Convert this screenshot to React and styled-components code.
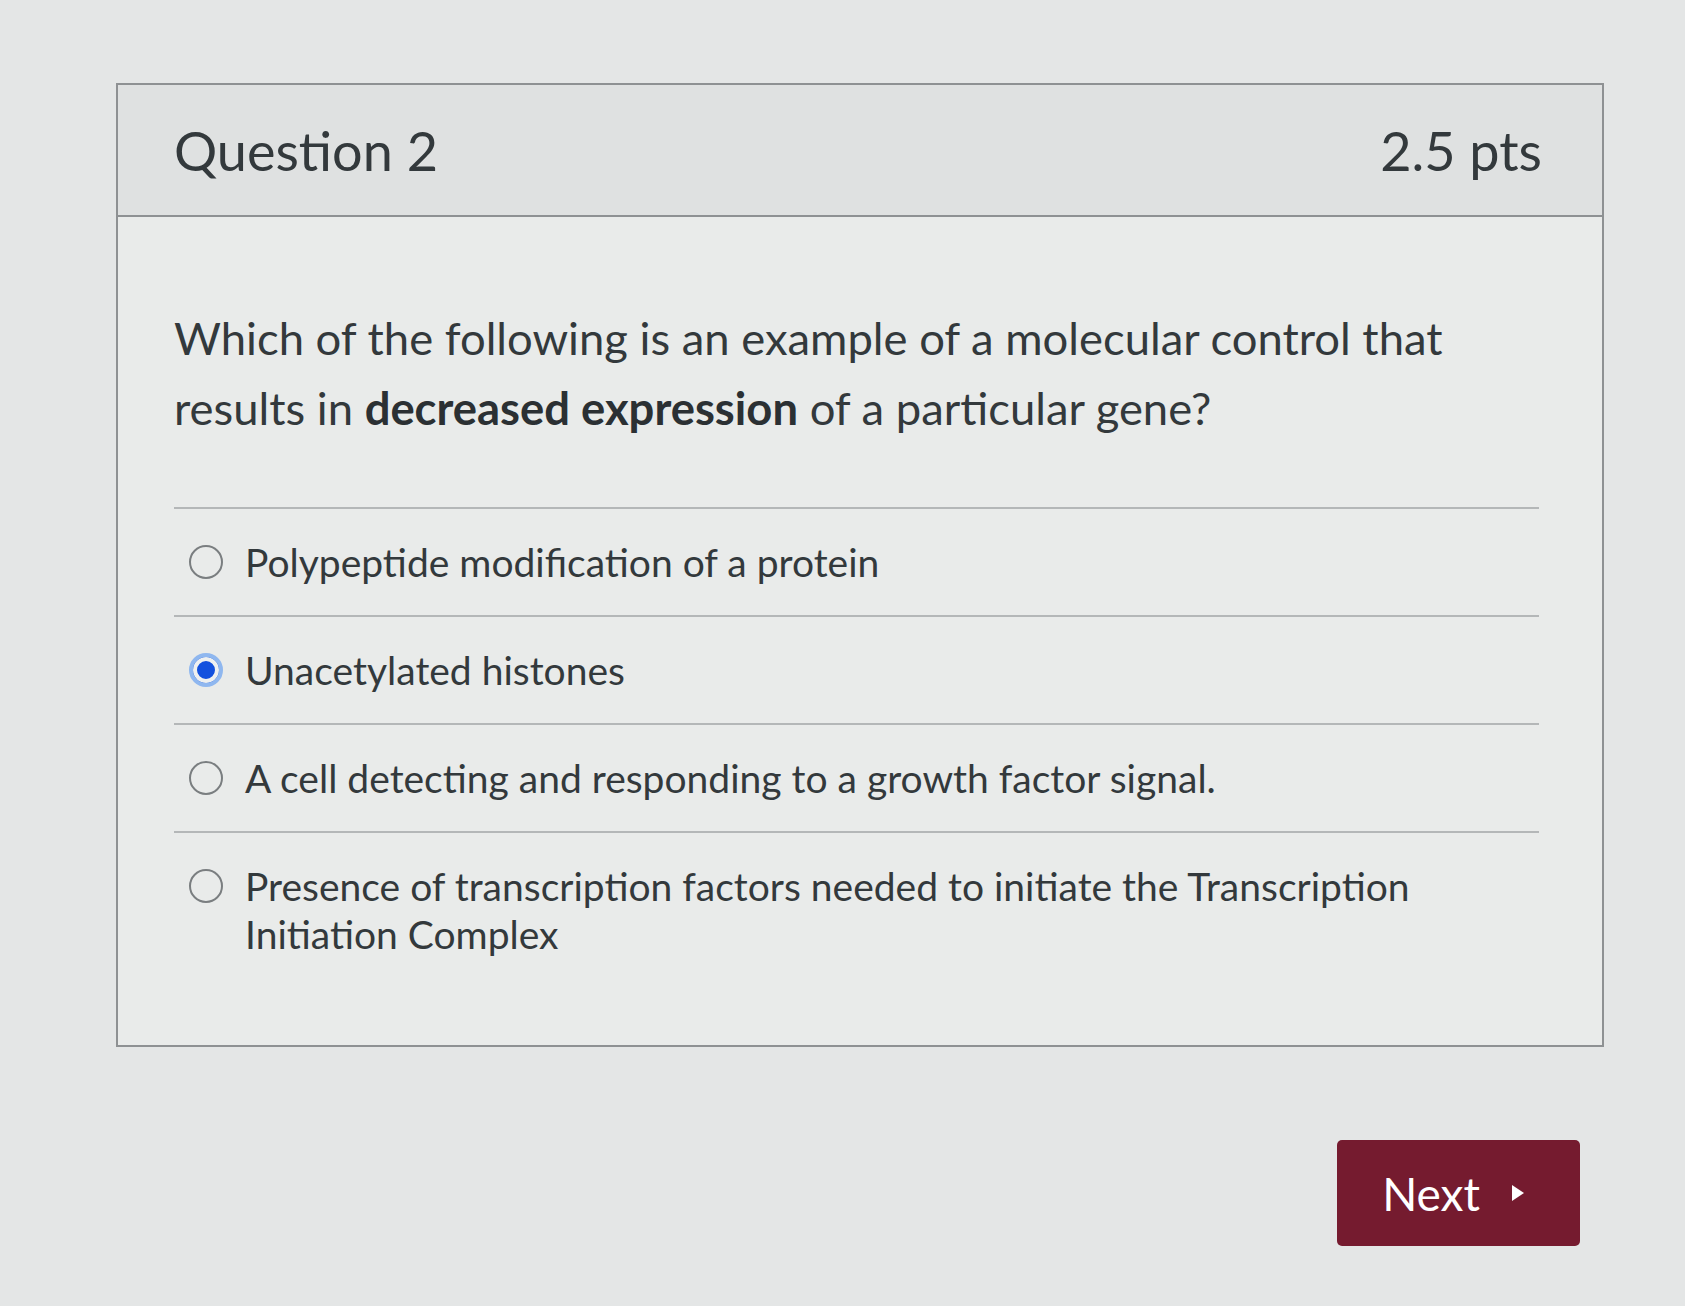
import React from "react";
import styled, { createGlobalStyle } from "styled-components";

const Global = createGlobalStyle`
  html, body { margin: 0; padding: 0; }
  body {
    background: #e4e6e6;
    font-family: Lato, "Open Sans", sans-serif;
    color: #2d3436;
    width: 1685px;
    height: 1306px;
    overflow: hidden;
  }
`;

const Page = styled.div`
  padding: 83px 0 0 116px;
  display: flex;
  flex-direction: column;
  width: 1488px;
`;

const Card = styled.section`
  border: 2px solid #8e9193;
  background: #e9ebea;
  display: flex;
  flex-direction: column;
`;

const Header = styled.header`
  display: flex;
  justify-content: space-between;
  align-items: center;
  height: 130px;
  padding: 0 60px 0 56px;
  background: #dfe1e1;
  border-bottom: 2px solid #8e9193;
  font-size: 54px;
  color: #33393c;
`;

const Body = styled.div`
  padding: 86px 58px 58px 56px;
`;

const Prompt = styled.p`
  margin: 0 0 64px;
  font-size: 45.4px;
  line-height: 70px;
  width: 1360px;
  color: #33393c;
`;

const Strong = styled.strong`
  font-weight: 700;
  color: #2b3033;
`;

const Answers = styled.div`
  border-top: 2px solid #b4b7b8;
  width: 1365px;
`;

const Answer = styled.label`
  display: flex;
  align-items: flex-start;
  gap: 22px;
  padding: 29px 0 29px 15px;
  border-bottom: ${p => (p.$last ? "none" : "2px solid #b4b7b8")};
  font-size: 39px;
  line-height: 48px;
  color: #33393c;
`;

const Radio = styled.span`
  flex: none;
  width: 34px;
  height: 34px;
  margin-top: 7px;
  border-radius: 50%;
  box-sizing: border-box;
  border: ${p => (p.$checked ? "4px solid #8fb7ef" : "2px solid #7a7e80")};
  background: ${p => (p.$checked ? "#1250de" : "transparent")};
  box-shadow: ${p => (p.$checked ? "inset 0 0 0 4px #eef0f0" : "none")};
`;

const Footer = styled.div`
  display: flex;
  justify-content: flex-end;
  padding: 93px 24px 0 0;
`;

const NextButton = styled.button`
  display: flex;
  align-items: center;
  gap: 30px;
  height: 106px;
  padding: 0 54px 0 45px;
  background: #751b2f;
  border: none;
  border-radius: 5px;
  color: #ffffff;
  font-family: Lato, sans-serif;
  font-size: 46px;
  cursor: pointer;
`;

const options = [
  "Polypeptide modification of a protein",
  "Unacetylated histones",
  "A cell detecting and responding to a growth factor signal.",
  "Presence of transcription factors needed to initiate the Transcription Initiation Complex",
];

export default function App() {
  return (
    <>
      <Global />
      <Page>
        <Card>
          <Header>
            <span>Question 2</span>
            <span>2.5 pts</span>
          </Header>
          <Body>
            <Prompt>
              Which of the following is an example of a molecular control that results in{" "}
              <Strong>decreased expression</Strong> of a particular gene?
            </Prompt>
            <Answers>
              {options.map((o, i) => (
                <Answer key={i} $last={i === options.length - 1}>
                  <Radio $checked={i === 1} />
                  <span>{o}</span>
                </Answer>
              ))}
            </Answers>
          </Body>
        </Card>
        <Footer>
          <NextButton>
            Next
            <svg width="16" height="20" viewBox="0 0 16 20">
              <path d="M2 2 L14 10 L2 18 Z" fill="#ffffff" />
            </svg>
          </NextButton>
        </Footer>
      </Page>
    </>
  );
}
